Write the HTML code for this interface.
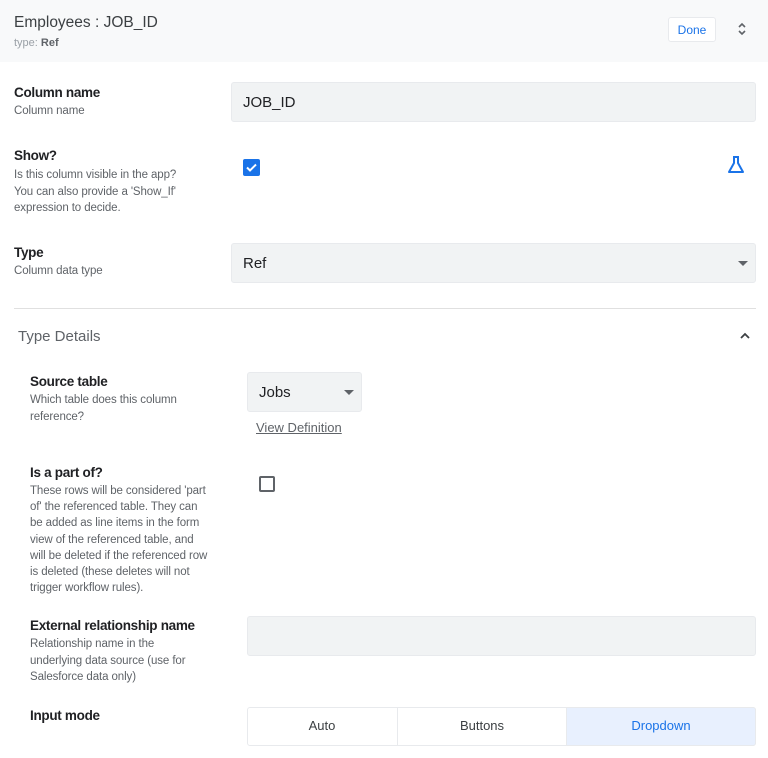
<!DOCTYPE html>
<html><head><style>
*{margin:0;padding:0;box-sizing:border-box}
body{width:768px;height:758px;background:#fff;font-family:"Liberation Sans",sans-serif;position:relative;overflow:hidden;color:#202124}
.a{position:absolute;white-space:nowrap}
.lbl{font-size:13.5px;font-weight:bold;color:#202124;letter-spacing:-0.3px}
.sub{font-size:11.5px;color:#5f6368;line-height:16.5px;letter-spacing:-0.1px}
.box{position:absolute;background:#f1f3f4;border:1px solid #e8eaed;border-radius:3px}
.arrow{position:absolute;width:0;height:0;border-left:5px solid transparent;border-right:5px solid transparent;border-top:5px solid #5f6368}
</style></head><body>
<div class="a" style="left:0;top:0;width:768px;height:62px;background:#f8f9fa"></div>
<div class="a" style="left:14px;top:14px;font-size:15.5px;color:#3c4043">Employees : JOB_ID</div>
<div class="a" style="left:14px;top:37px;font-size:11px;color:#9aa0a6">type: <b style="color:#5f6368">Ref</b></div>
<div class="a" style="left:668px;top:17px;width:48px;height:25px;background:#fff;border:1px solid #e8eaed;border-radius:3px;font-size:12px;color:#1a73e8;text-align:center;line-height:24px">Done</div>
<svg class="a" style="left:737px;top:22px" width="10" height="14" viewBox="0 0 10 14"><path d="M2 5L5 2L8 5M2 9L5 12L8 9" stroke="#5f6368" stroke-width="1.6" fill="none"/></svg>

<div class="a lbl" style="left:14px;top:85px">Column name</div>
<div class="a sub" style="left:14px;top:103px">Column name</div>
<div class="box" style="left:231px;top:82px;width:525px;height:40px"></div>
<div class="a" style="left:243px;top:94px;font-size:15px;color:#202124">JOB_ID</div>

<div class="a lbl" style="left:14px;top:148px">Show?</div>
<div class="a sub" style="left:14px;top:167px">Is this column visible in the app?<br>You can also provide a 'Show_If'<br>expression to decide.</div>
<div class="a" style="left:243px;top:159px;width:17px;height:17px;background:#1a73e8;border-radius:2px"></div>
<svg class="a" style="left:243px;top:159px" width="17" height="17" viewBox="0 0 17 17"><path d="M4 8.5L7 11.5L13 5.5" stroke="#fff" stroke-width="2" fill="none"/></svg>
<svg class="a" style="left:726px;top:155px" width="20" height="20" viewBox="0 0 20 20"><path d="M7 2H13M8 2V8L3 17H17L12 8V2" stroke="#1a73e8" stroke-width="2" fill="none" stroke-linejoin="round"/></svg>

<div class="a lbl" style="left:14px;top:245px">Type</div>
<div class="a sub" style="left:14px;top:263px">Column data type</div>
<div class="box" style="left:231px;top:243px;width:525px;height:40px"></div>
<div class="a" style="left:243px;top:255px;font-size:15px">Ref</div>
<div class="arrow" style="left:738px;top:261px"></div>

<div class="a" style="left:14px;top:308px;width:742px;height:1px;background:#e0e0e0"></div>
<div class="a" style="left:18px;top:328px;font-size:15px;color:#5f6368">Type Details</div>
<svg class="a" style="left:739px;top:331px" width="12" height="10" viewBox="0 0 12 10"><path d="M2 7L6 3L10 7" stroke="#3c4043" stroke-width="1.8" fill="none"/></svg>

<div class="a lbl" style="left:30px;top:374px">Source table</div>
<div class="a sub" style="left:30px;top:392px">Which table does this column<br>reference?</div>
<div class="box" style="left:247px;top:372px;width:115px;height:40px"></div>
<div class="a" style="left:259px;top:384px;font-size:15px">Jobs</div>
<div class="arrow" style="left:344px;top:390px"></div>
<div class="a" style="left:256px;top:420px;font-size:13px;color:#5f6368;text-decoration:underline">View Definition</div>

<div class="a lbl" style="left:30px;top:465px">Is a part of?</div>
<div class="a sub" style="left:30px;top:483px;line-height:16.2px">These rows will be considered 'part<br>of' the referenced table. They can<br>be added as line items in the form<br>view of the referenced table, and<br>will be deleted if the referenced row<br>is deleted (these deletes will not<br>trigger workflow rules).</div>
<div class="a" style="left:259px;top:476px;width:16px;height:16px;border:2px solid #5f6368;border-radius:2px"></div>

<div class="a lbl" style="left:30px;top:618px">External relationship name</div>
<div class="a sub" style="left:30px;top:636px">Relationship name in the<br>underlying data source (use for<br>Salesforce data only)</div>
<div class="box" style="left:247px;top:616px;width:509px;height:40px"></div>

<div class="a lbl" style="left:30px;top:708px">Input mode</div>
<div class="a" style="left:247px;top:707px;width:509px;height:39px;border:1px solid #e8eaed;border-radius:3px"></div>
<div class="a" style="left:397px;top:707px;width:1px;height:39px;background:#e8eaed"></div>
<div class="a" style="left:566px;top:707px;width:190px;height:39px;background:#e8f0fe;border:1px solid #e8eaed;border-radius:0 3px 3px 0"></div>
<div class="a" style="left:247px;top:718px;width:150px;text-align:center;font-size:13px;color:#3c4043">Auto</div>
<div class="a" style="left:398px;top:718px;width:168px;text-align:center;font-size:13px;color:#3c4043">Buttons</div>
<div class="a" style="left:566px;top:718px;width:190px;text-align:center;font-size:13px;color:#1a73e8">Dropdown</div>
</body></html>
